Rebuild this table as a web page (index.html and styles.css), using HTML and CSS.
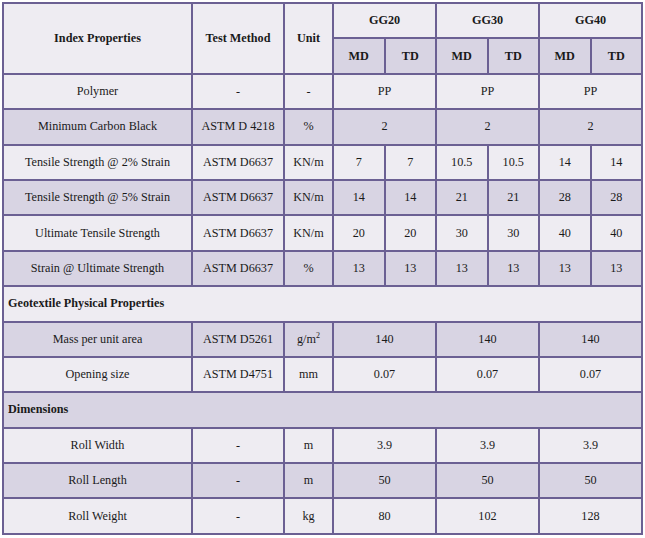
FILE: index.html
```html
<!DOCTYPE html>
<html>
<head>
<meta charset="utf-8">
<link rel="stylesheet" href="styles.css">
</head>
<body>
<table class="spec">
  <colgroup>
    <col class="c-prop"><col class="c-method"><col class="c-unit">
    <col class="c-v"><col class="c-v"><col class="c-v"><col class="c-v"><col class="c-v"><col class="c-v">
  </colgroup>
  <tr class="light">
    <th rowspan="2">Index Properties</th>
    <th rowspan="2">Test Method</th>
    <th rowspan="2">Unit</th>
    <th colspan="2">GG20</th>
    <th colspan="2">GG30</th>
    <th colspan="2">GG40</th>
  </tr>
  <tr class="dark">
    <th>MD</th><th>TD</th><th>MD</th><th>TD</th><th>MD</th><th>TD</th>
  </tr>
  <tr class="light">
    <td>Polymer</td><td>-</td><td>-</td>
    <td colspan="2">PP</td><td colspan="2">PP</td><td colspan="2">PP</td>
  </tr>
  <tr class="dark">
    <td>Minimum Carbon Black</td><td>ASTM D 4218</td><td>%</td>
    <td colspan="2">2</td><td colspan="2">2</td><td colspan="2">2</td>
  </tr>
  <tr class="light">
    <td>Tensile Strength @ 2% Strain</td><td>ASTM D6637</td><td>KN/m</td>
    <td>7</td><td>7</td><td>10.5</td><td>10.5</td><td>14</td><td>14</td>
  </tr>
  <tr class="dark">
    <td>Tensile Strength @ 5% Strain</td><td>ASTM D6637</td><td>KN/m</td>
    <td>14</td><td>14</td><td>21</td><td>21</td><td>28</td><td>28</td>
  </tr>
  <tr class="light">
    <td>Ultimate Tensile Strength</td><td>ASTM D6637</td><td>KN/m</td>
    <td>20</td><td>20</td><td>30</td><td>30</td><td>40</td><td>40</td>
  </tr>
  <tr class="dark">
    <td>Strain @ Ultimate Strength</td><td>ASTM D6637</td><td>%</td>
    <td>13</td><td>13</td><td>13</td><td>13</td><td>13</td><td>13</td>
  </tr>
  <tr class="light">
    <td class="section" colspan="9">Geotextile Physical Properties</td>
  </tr>
  <tr class="dark">
    <td>Mass per unit area</td><td>ASTM D5261</td><td>g/m<sup>2</sup></td>
    <td colspan="2">140</td><td colspan="2">140</td><td colspan="2">140</td>
  </tr>
  <tr class="light">
    <td>Opening size</td><td>ASTM D4751</td><td>mm</td>
    <td colspan="2">0.07</td><td colspan="2">0.07</td><td colspan="2">0.07</td>
  </tr>
  <tr class="dark">
    <td class="section" colspan="9">Dimensions</td>
  </tr>
  <tr class="light">
    <td>Roll Width</td><td>-</td><td>m</td>
    <td colspan="2">3.9</td><td colspan="2">3.9</td><td colspan="2">3.9</td>
  </tr>
  <tr class="dark">
    <td>Roll Length</td><td>-</td><td>m</td>
    <td colspan="2">50</td><td colspan="2">50</td><td colspan="2">50</td>
  </tr>
  <tr class="light">
    <td>Roll Weight</td><td>-</td><td>kg</td>
    <td colspan="2">80</td><td colspan="2">102</td><td colspan="2">128</td>
  </tr>
</table>
</body>
</html>
```

FILE: styles.css
```css
html, body {
  margin: 0;
  padding: 0;
  background: #ffffff;
}

body {
  padding: 2px 0 0 2px;
  font-family: "Liberation Serif", "Times New Roman", serif;
  font-size: 12.2px;
  color: #1a1a1a;
}

.spec {
  border-collapse: collapse;
  table-layout: fixed;
  width: 639px;
  border: 2px solid #6b6093;
}

.c-prop { width: 189px; }
.c-method { width: 92px; }
.c-unit { width: 49px; }
.c-v { width: 51.5px; }

.spec th,
.spec td {
  border: 2px solid #6b6093;
  text-align: center;
  vertical-align: middle;
  padding: 0 2px;
  white-space: nowrap;
}

.spec th {
  font-weight: bold;
}

.spec tr {
  height: 35.4px;
}

.light {
  background: #eeecf2;
}

.dark {
  background: #d8d4e3;
}

.spec td.section {
  text-align: left;
  font-weight: bold;
  padding-left: 4px;
}

sup {
  font-size: 8px;
  line-height: 0;
  vertical-align: 5px;
}
```
